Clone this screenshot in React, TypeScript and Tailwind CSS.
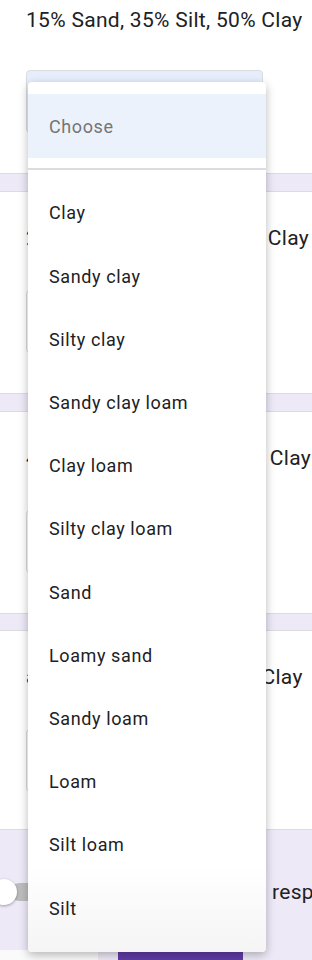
const items = [
  "Clay",
  "Sandy clay",
  "Silty clay",
  "Sandy clay loam",
  "Clay loam",
  "Silty clay loam",
  "Sand",
  "Loamy sand",
  "Sandy loam",
  "Loam",
  "Silt loam",
  "Silt",
];

function Card({ text, last, right }: { text: string; last?: boolean; right: string }) {
  return (
    <div className={`bg-white px-[26px] pt-[32px] shrink-0 ${last ? "h-[198px]" : "h-[201px]"}`}>
      <div className="text-[21px] leading-[28px] tracking-[0.3px] text-[#202124] whitespace-nowrap flex">
        <span>{text}</span>
        <span className={right}>Clay</span>
      </div>
      <div className="mt-[38px] h-[63px] w-[237px] rounded-[4px] border border-[#dadce0] bg-white" />
    </div>
  );
}

function Band({ h }: { h: string }) {
  return <div className={`${h} shrink-0 bg-[#ede9f7] border-y border-[#dadce0]`} />;
}

export default function App() {
  return (
    <div className="relative w-[312px] h-[960px] overflow-hidden bg-[#ede9f7] font-['Roboto',sans-serif] flex flex-col">
      <div className="bg-white px-[26px] pt-[6px] h-[173px] shrink-0">
        <div className="text-[21px] leading-[28px] tracking-[0.3px] text-[#202124] whitespace-nowrap">
          15% Sand, 35% Silt, 50% Clay
        </div>
        <div className="mt-[36px] h-[63px] w-[237px] rounded-[4px] border border-[#dadce0] bg-[#e6eefb]" />
      </div>
      <Band h="h-[19px]" />
      <Card text="25% Sand, 25% Silt, 50%" right="ml-[12px]" />
      <Band h="h-[19px]" />
      <Card text="40% Sand, 10% Silt, 50%" right="ml-[14px]" />
      <Band h="h-[18px]" />
      <Card text="a5% Sand, 45% Silt, 50%" right="ml-[6px]" last />
      <div className="flex-1 border-t border-[#dadce0] flex flex-col">
        <div className="flex items-center h-[62px] mt-[31px]">
          <div className="relative w-[272px] shrink-0 h-[30px] flex items-center">
            <div className="absolute left-[10px] top-[6px] w-[40px] h-[18px] rounded-full bg-[#bdbdbd]" />
            <div className="relative ml-[-9px] w-[26px] h-[26px] rounded-full bg-white shadow-[0_1px_3px_rgba(0,0,0,0.35)]" />
          </div>
          <span className="text-[21px] leading-[28px] tracking-[0.3px] text-[#202124] whitespace-nowrap">responses</span>
        </div>
        <div className="mt-auto flex items-end h-[10px]">
          <div className="w-[98px] h-[10px] bg-[#fafafa]" />
          <div className="ml-[20px] w-[125px] h-[8px] bg-[#613ca6]" />
        </div>
      </div>

      <div className="absolute left-[28px] top-[82px] w-[238px] h-[870px] rounded-[4px] bg-[linear-gradient(to_bottom,#ffffff_0%,#ffffff_90%,#f5f5f5_100%)] shadow-[0_3px_10px_rgba(0,0,0,0.28)] pt-[12px]">
        <div className="h-[64px] bg-[#ecf2fc] flex items-center pl-[21px] text-[18px] tracking-[0.6px] text-[#757575]">
          Choose
        </div>
        <div className="mt-[10px] h-[2px] bg-[#dadce0]" />
        <div className="mt-[11.4px] flex flex-col">
          {items.map((it) => (
            <div key={it} className="h-[63.2px] flex items-center pl-[21px] text-[18px] tracking-[0.6px] text-[#202124]">
              {it}
            </div>
          ))}
        </div>
      </div>
    </div>
  );
}
